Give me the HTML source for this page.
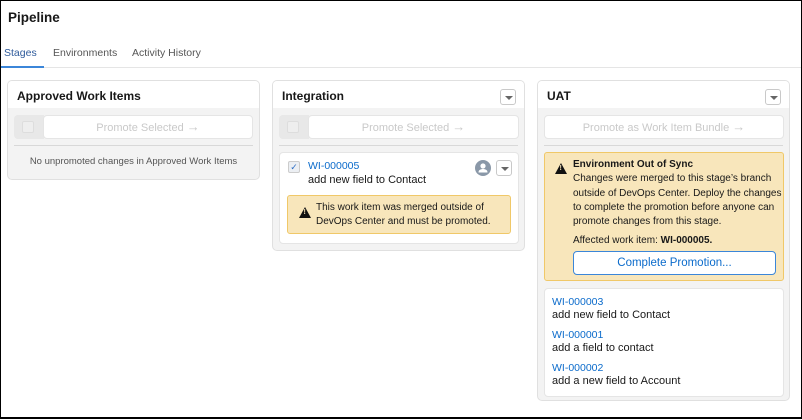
<!DOCTYPE html>
<html><head><meta charset="utf-8"><style>
*{box-sizing:border-box;margin:0;padding:0}
body{width:802px;height:420px;overflow:hidden;background:#fff;font-family:"Liberation Sans",sans-serif;color:#181818;position:relative}
.frame{position:absolute;left:0;top:0;width:802px;height:419px;border:1px solid #000;border-bottom-width:2px}
.a{position:absolute}
.col{position:absolute;background:#f3f3f3;border:1px solid #e0e0e0;border-radius:5px;overflow:hidden}
.hd{position:absolute;left:0;right:0;top:0;height:27px;background:#fff;font-weight:bold;font-size:12px;padding:8px 0 0 9px}
.dd{position:absolute;width:16px;height:16px;border:1px solid #c9c9c9;border-radius:3px;background:#fff}
.dd:after{content:"";position:absolute;left:4px;top:6px;border-left:4px solid transparent;border-right:4px solid transparent;border-top:4px solid #666}
.bar{position:absolute;height:24px;background:#fff;border:1px solid #e5e5e5;border-radius:4px;color:#c9c9c9;font-size:11px;text-align:center;line-height:22px}
.bar span{font-size:13px}
.cbx{position:absolute;background:#e8e8e8;border-radius:4px 0 0 4px}
.cbx i{position:absolute;left:8px;top:6px;width:12px;height:12px;background:#eee;border:1px solid #ddd;border-radius:2px}
.div{position:absolute;height:1px;background:#d8d8d8}
.card{position:absolute;background:#fff;border:1px solid #e5e5e5;border-radius:4px}
.warn{position:absolute;background:#f8e6bb;border:1px solid #f0c868;border-radius:3px;font-size:10px;line-height:14.3px;color:#181818;white-space:nowrap}
.tri{position:absolute;width:0;height:0;border-left:6px solid transparent;border-right:6px solid transparent;border-bottom:11px solid #111}
.tri:after{content:"!";position:absolute;left:-1.5px;top:2px;color:#f8e6bb;font-size:7px;font-weight:bold;line-height:8px}
.lk{color:#0b6bcb;font-size:10.5px}
.tx{font-size:11px}
</style></head><body>
<div class="a" style="left:8px;top:10px;font-size:13.5px;font-weight:bold">Pipeline</div>
<div class="a" style="left:4px;top:47px;font-size:10.5px;color:#2e5a9b">Stages</div>
<div class="a" style="left:53px;top:47px;font-size:10.5px;color:#555">Environments</div>
<div class="a" style="left:132px;top:47px;font-size:10.5px;color:#555">Activity History</div>
<div class="a" style="left:0;top:67px;width:802px;height:1px;background:#e5e5e5"></div>
<div class="a" style="left:1px;top:66px;width:43px;height:2px;background:#3b86d9"></div>

<div class="col" style="left:7px;top:80px;width:253px;height:100px">
 <div class="hd">Approved Work Items</div>
 <div class="cbx" style="left:6px;top:34px;width:30px;height:24px"><i></i></div>
 <div class="bar" style="left:35px;top:34px;width:210px">Promote Selected <span>→</span></div>
 <div class="div" style="left:6px;right:6px;top:64px"></div>
 <div class="a" style="left:0;right:0;top:75px;text-align:center;font-size:9.5px;color:#555">No unpromoted changes in Approved Work Items</div>
</div>

<div class="col" style="left:272px;top:80px;width:253px;height:171px">
 <div class="hd">Integration</div>
 <div class="dd" style="left:227px;top:8px"></div>
 <div class="cbx" style="left:6px;top:34px;width:30px;height:24px"><i></i></div>
 <div class="bar" style="left:35px;top:34px;width:211px">Promote Selected <span>→</span></div>
 <div class="div" style="left:6px;right:6px;top:64px"></div>
 <div class="card" style="left:6px;top:71px;width:240px;height:92px">
  <div class="a" style="left:8px;top:8px;width:12px;height:12px;background:#eceff3;border:1px solid #ccc;border-radius:2px;color:#2f6fc5;font-size:9px;line-height:10px;text-align:center">✓</div>
  <div class="a lk" style="left:28px;top:7px">WI-000005</div>
  <div class="a tx" style="left:28px;top:21px">add new field to Contact</div>
  <svg class="a" style="left:195px;top:7px" width="16" height="16" viewBox="0 0 16 16"><circle cx="8" cy="8" r="8" fill="#8a98a8"/><circle cx="8" cy="6" r="2.6" fill="#fff"/><path d="M3.5 12.5c0-2.5 2-3.5 4.5-3.5s4.5 1 4.5 3.5z" fill="#fff"/></svg>
  <div class="dd" style="left:216px;top:7px"></div>
  <div class="warn" style="left:7px;top:42px;width:224px;height:39px;padding:5px 0 0 28px">This work item was merged outside of<br>DevOps Center and must be promoted.</div>
  <div class="tri" style="left:19px;top:54px"></div>
 </div>
</div>

<div class="col" style="left:537px;top:80px;width:253px;height:321px">
 <div class="hd">UAT</div>
 <div class="dd" style="left:227px;top:8px"></div>
 <div class="bar" style="left:6px;top:34px;width:240px">Promote as Work Item Bundle <span>→</span></div>
 <div class="div" style="left:6px;right:6px;top:64px"></div>
 <div class="warn" style="left:6px;top:71px;width:240px;height:129px;padding:5px 0 0 28px">
  <b>Environment Out of Sync</b><br>Changes were merged to this stage’s branch<br>outside of DevOps Center. Deploy the changes<br>to complete the promotion before anyone can<br>promote changes from this stage.
  <div style="margin-top:5px">Affected work item: <b>WI-000005.</b></div>
 </div>
 <div class="tri" style="left:17px;top:82px"></div>
 <div class="a" style="left:35px;top:170px;width:203px;height:24px;background:#fff;border:1px solid #3b86d9;border-radius:4px;color:#0b6bcb;font-size:11.5px;text-align:center;line-height:22px">Complete Promotion...</div>
 <div class="card" style="left:6px;top:207px;width:240px;height:109px">
  <div class="a lk" style="left:7px;top:7px">WI-000003</div>
  <div class="a tx" style="left:7px;top:20px">add new field to Contact</div>
  <div class="a lk" style="left:7px;top:40px">WI-000001</div>
  <div class="a tx" style="left:7px;top:53px">add a field to contact</div>
  <div class="a lk" style="left:7px;top:73px">WI-000002</div>
  <div class="a tx" style="left:7px;top:86px">add a new field to Account</div>
 </div>
</div>
<div class="frame"></div>
</body></html>
